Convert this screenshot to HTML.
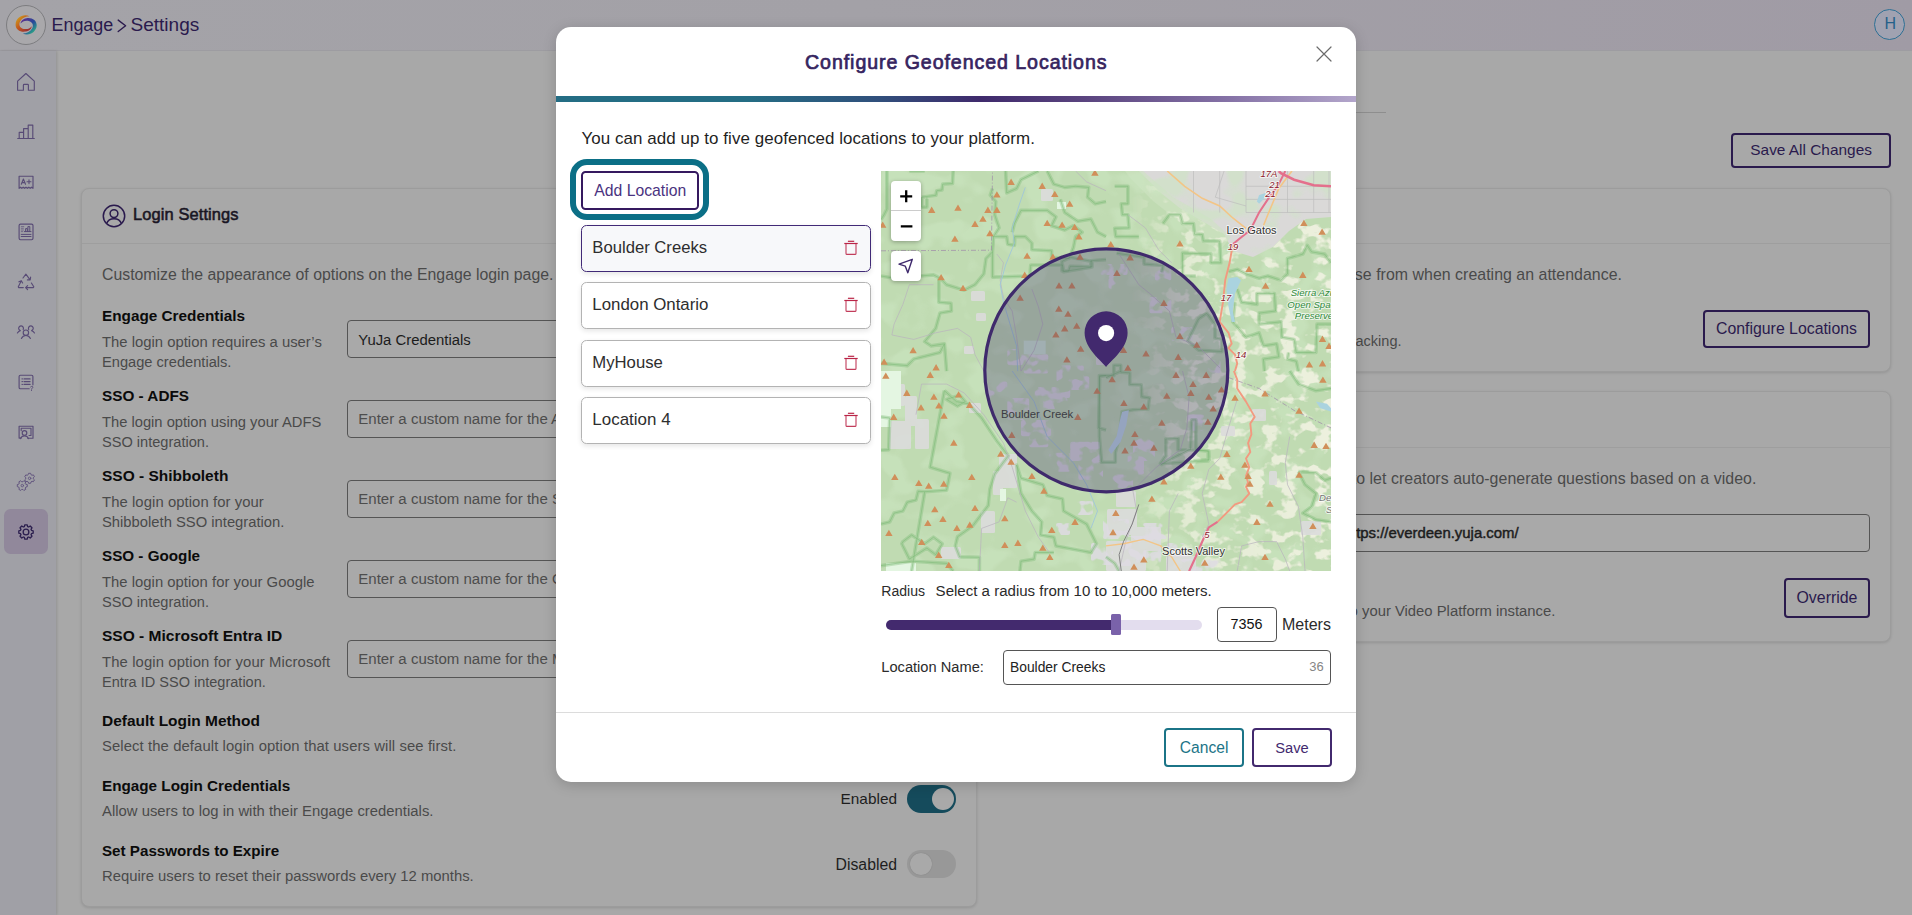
<!DOCTYPE html>
<html><head><meta charset="utf-8"><title>Engage Settings</title>
<style>
*{box-sizing:border-box;margin:0;padding:0}
html,body{width:1912px;height:915px;overflow:hidden;background:#a8a8a8;font-family:"Liberation Sans",sans-serif;}
.t{position:absolute;white-space:nowrap;line-height:24px;height:24px;}
.b{position:absolute;}
svg{position:absolute;overflow:visible}
</style></head>
<body>
<div id="root" style="position:absolute;left:0;top:0;width:1912px;height:915px;overflow:hidden">
<div class="b" style="left:0.0px;top:0.0px;width:1912.0px;height:50.5px;background:linear-gradient(90deg,#a4a3a8 0%,#a3a1a7 45%,#a09ba5 100%);"></div>
<div class="b" style="left:0.0px;top:50.0px;width:1912.0px;height:1.0px;background:#9d9ca1;"></div>
<div class="b" style="left:0.0px;top:51.0px;width:56.0px;height:864.0px;background:#a0a0a6;box-shadow:1px 0 2.5px rgba(0,0,0,0.13);"></div>
<svg style="left:6px;top:5px" width="40" height="40" viewBox="0 0 40 40">
<defs>
<linearGradient id="lg1" x1="0" y1="0" x2="1" y2="1"><stop offset="0" stop-color="#d2b21c"/><stop offset=".45" stop-color="#c25a1d"/><stop offset="1" stop-color="#8a1f3a"/></linearGradient>
<linearGradient id="lg2" x1="0" y1="0" x2="1" y2="1"><stop offset="0" stop-color="#6a2a8a"/><stop offset=".5" stop-color="#27469a"/><stop offset=".8" stop-color="#2a9a8a"/><stop offset="1" stop-color="#8ab02a"/></linearGradient>
</defs>
<circle cx="20" cy="20" r="19.5" fill="#a9a8ab" stroke="#7d7d80" stroke-width="1"/>
<path d="M23.5 11.2 C17 8.5 10 12.5 9.6 19.2 C9.3 24.5 14.5 27.5 19.8 26.6 C23.5 26 25.8 23.4 25.6 21.2 C24.2 23.6 20.8 24.6 17.6 23.9 C13.6 23 12.4 19.4 14.2 16.2 C16 13 20 11.2 23.5 11.2 Z" fill="url(#lg1)"/>
<path d="M16.8 28.6 C23.3 31.3 30.3 27.3 30.7 20.6 C31 15.3 25.8 12.3 20.5 13.2 C16.8 13.8 14.5 16.4 14.7 18.6 C16.1 16.2 19.5 15.2 22.7 15.9 C26.7 16.8 27.9 20.4 26.1 23.6 C24.3 26.8 20.3 28.6 16.8 28.6 Z" fill="url(#lg2)"/>
</svg>
<div class="t " style="left:51.5px;top:12.5px;font-size:17.92px;font-weight:400;color:#2a1a4d;letter-spacing:0.0px;">Engage</div>
<svg style="left:116px;top:16px" width="12" height="18" viewBox="0 0 12 18" fill="none" stroke="#2a1a4d" stroke-width="1.4" stroke-linecap="round" stroke-linejoin="round"><path d="M2.2 4.1 L9.6 9.8 L2.2 15.5"/></svg>
<div class="t " style="left:130.5px;top:12.5px;font-size:19.04px;font-weight:400;color:#2a1a4d;letter-spacing:0.0px;">Settings</div>
<div class="b" style="left:1873.6px;top:8.6px;width:31.4px;height:31.4px;border-radius:50%;border:1.2px solid #2e7095;background:#a0a2b1;"></div>
<div class="t " style="left:1884.4px;top:12.1px;font-size:16px;font-weight:400;color:#25618a;letter-spacing:0px;">H</div>
<div class="b" style="left:4.0px;top:509.0px;width:44.0px;height:45.0px;background:#91889b;border-radius:6.5px;"></div>
<svg style="left:16px;top:72px" width="20" height="20" viewBox="0 0 20 20" fill="none" stroke="#584b76" stroke-width="1.15" stroke-linecap="round" stroke-linejoin="round"><path d="M1.6 9.2 L9.9 1.5 L18.3 9.2 V18.2 H12.4 V13.2 Q12.4 12.4 11.6 12.4 H8.2 Q7.4 12.4 7.4 13.2 V18.2 H1.6 Z"/></svg>
<svg style="left:16px;top:122px" width="20" height="20" viewBox="0 0 20 20" fill="none" stroke="#584b76" stroke-width="1.15" stroke-linecap="round" stroke-linejoin="round"><path d="M1.7 16.5 H18.3 M3.2 16.5 V10.4 H7.6 V16.5 M7.6 16.5 V6.6 H12.2 V16.5 M12.2 16.5 V3.1 H16.8 V16.5"/></svg>
<svg style="left:16px;top:172px" width="20" height="20" viewBox="0 0 20 20" fill="none" stroke="#584b76" stroke-width="1.15" stroke-linecap="round" stroke-linejoin="round"><path d="M3.1 16.3 V4.2 H17 V16.3 L15.6 15.2 L14.2 16.3 L12.8 15.2 L11.4 16.3 L10 15.2 L8.6 16.3 L7.2 15.2 L5.8 16.3 L4.4 15.2 Z"/><path d="M5.3 12.2 L7.4 7 L9.5 12.2 M6 10.6 H8.8 M11 9.7 H15 M13 7.8 V11.6" stroke-width="1.1"/></svg>
<svg style="left:16px;top:222px" width="20" height="20" viewBox="0 0 20 20" fill="none" stroke="#584b76" stroke-width="1.15" stroke-linecap="round" stroke-linejoin="round"><rect x="3.1" y="2.1" width="13.9" height="15.6" rx="1.4"/><path d="M5.2 12.4 H15 M5.2 14.5 H15" stroke-width="1"/><path d="M5.3 4.6 H7.8 M5.3 6.3 H7.4 M5.3 8 H7.4 M5.3 9.6 H6.8" stroke-width="0.8" stroke-opacity=".8"/><path d="M8.4 9.6 H15 M9.6 9.6 V6.6 H11.3 V9.6 M11.9 9.6 V4.6 H13.8 V9.6" stroke-width="1"/></svg>
<svg style="left:16px;top:272px" width="20" height="20" viewBox="0 0 20 20" fill="none" stroke="#584b76" stroke-width="1.15" stroke-linecap="round" stroke-linejoin="round"><path d="M7 6 L9.9 2.2 L14.1 7.8 M11.4 7.9 L14.2 7.9 L14.6 5.1" /><path d="M7.3 15.6 H2.6 L2.3 14.8 L5.3 8.8 M2.9 9.8 L5.3 8.7 L6.6 11"/><path d="M15.4 11 L17.8 14.8 L17.4 15.6 H9.7 M11.6 13.6 L9.6 15.6 L11.6 17.7"/></svg>
<svg style="left:16px;top:322px" width="20" height="20" viewBox="0 0 20 20" fill="none" stroke="#584b76" stroke-width="1.15" stroke-linecap="round" stroke-linejoin="round"><circle cx="9.9" cy="10.7" r="2.7"/><path d="M5.4 16.5 C6.6 14.2 8.2 13.5 9.9 13.5 C11.6 13.5 13.2 14.2 14.4 16.5"/><path d="M7.2 7.4 A2.4 2.4 0 1 0 4.3 8.6 M1.4 11 C2.2 9.6 3.1 8.9 4.3 8.6"/><path d="M12.7 7.4 A2.4 2.4 0 1 1 15.6 8.6 M18.5 11 C17.7 9.6 16.8 8.9 15.6 8.6"/></svg>
<svg style="left:16px;top:372px" width="20" height="20" viewBox="0 0 20 20" fill="none" stroke="#584b76" stroke-width="1.15" stroke-linecap="round" stroke-linejoin="round"><path d="M13.2 16.7 H4.4 Q3.1 16.7 3.1 15.4 V4.5 Q3.1 3.2 4.4 3.2 H15.6 Q16.9 3.2 16.9 4.5 V12.8"/><path d="M8.1 6.9 H14.1 M8.1 9.6 H14.1 M8.1 12.4 H14.1" stroke-width="1.1"/><path d="M5.9 6.9 H6.8 M5.9 9.6 H6.8 M5.9 12.4 H6.8" stroke-width="1"/><path d="M14.6 14.9 Q15.6 14 16.6 14.6 Q17.3 15.4 16 16.4 L15.7 17.2 M15.5 18.3 V18.5" stroke-width="0.95"/></svg>
<svg style="left:16px;top:422px" width="20" height="20" viewBox="0 0 20 20" fill="none" stroke="#584b76" stroke-width="1.15" stroke-linecap="round" stroke-linejoin="round"><path d="M5.2 15.9 L3.1 16.2 V4.2 H17 V16.2 H11.8"/><path d="M5.2 8.6 V6.3 H15 V13.5 H13" stroke-width="1.1"/><circle cx="8.5" cy="10.9" r="2.3"/><path d="M4.6 16.6 C5.4 14.6 6.8 13.9 8.5 13.9 C10.2 13.9 11.6 14.6 12.4 16.6"/></svg>
<svg style="left:16px;top:472px" width="20" height="20" viewBox="0 0 20 20" fill="none" stroke="#62557f" stroke-width="1.15" stroke-linecap="round" stroke-linejoin="round"><path d="M17.45 6.92 L18.46 7.86 L17.40 9.70 L16.08 9.31 L14.99 9.95 L14.68 11.28 L12.55 11.29 L12.24 9.95 L11.14 9.32 L9.82 9.73 L8.75 7.89 L9.75 6.95 L9.75 5.68 L8.74 4.74 L9.80 2.90 L11.12 3.29 L12.21 2.65 L12.52 1.32 L14.65 1.31 L14.96 2.65 L16.06 3.28 L17.38 2.87 L18.45 4.71 L17.45 5.65 Z" stroke-width="1"/><circle cx="13.6" cy="6.3" r="1.25" stroke-width="0.9"/><path d="M9.95 12.23 L11.29 12.54 L11.29 14.66 L9.95 14.97 L9.31 16.07 L9.71 17.39 L7.87 18.45 L6.94 17.45 L5.66 17.45 L4.73 18.45 L2.89 17.39 L3.29 16.07 L2.65 14.97 L1.31 14.66 L1.31 12.54 L2.65 12.23 L3.29 11.13 L2.89 9.81 L4.73 8.75 L5.66 9.75 L6.94 9.75 L7.87 8.75 L9.71 9.81 L9.31 11.13 Z" stroke-width="1"/><circle cx="6.3" cy="13.6" r="1.25" stroke-width="0.9"/></svg>
<svg style="left:16px;top:522px" width="20" height="20" viewBox="0 0 20 20" fill="none" stroke="#2b1e4e" stroke-width="1.3" stroke-linecap="round" stroke-linejoin="round"><path d="M15.46 8.37 L17.19 8.76 L17.19 11.24 L15.46 11.63 L15.01 12.71 L15.96 14.21 L14.21 15.96 L12.71 15.01 L11.63 15.46 L11.24 17.19 L8.76 17.19 L8.37 15.46 L7.29 15.01 L5.79 15.96 L4.04 14.21 L4.99 12.71 L4.54 11.63 L2.81 11.24 L2.81 8.76 L4.54 8.37 L4.99 7.29 L4.04 5.79 L5.79 4.04 L7.29 4.99 L8.37 4.54 L8.76 2.81 L11.24 2.81 L11.63 4.54 L12.71 4.99 L14.21 4.04 L15.96 5.79 L15.01 7.29 Z" stroke-linejoin="round"/><circle cx="10" cy="10" r="2.85"/></svg>
<div class="b" style="left:1356.0px;top:112.0px;width:30.0px;height:1.0px;background:#8e8e8e;"></div>
<div class="b" style="left:1731.0px;top:133.0px;width:160.0px;height:35.0px;border:2px solid #2a1a4d;border-radius:4px;background:#a8a8a8;"></div>
<div class="t " style="left:1750.3px;top:138.0px;font-size:15.42px;font-weight:400;color:#2a1a4d;letter-spacing:0.0px;">Save All Changes</div>
<div class="b" style="left:81.0px;top:187.5px;width:896.0px;height:719.0px;background:#a8a8a8;border:1px solid #9c9c9c;border-radius:8px;box-shadow:0 1px 3px rgba(0,0,0,0.12);"></div>
<div class="b" style="left:82.0px;top:243.0px;width:894.0px;height:1.0px;background:#9e9e9e;"></div>
<div class="b" style="left:1000.0px;top:187.5px;width:891.0px;height:184.5px;background:#a8a8a8;border:1px solid #9c9c9c;border-radius:8px;box-shadow:0 1px 3px rgba(0,0,0,0.12);"></div>
<div class="b" style="left:1001.0px;top:243.0px;width:889.0px;height:1.0px;background:#9e9e9e;"></div>
<div class="b" style="left:1000.0px;top:391.0px;width:891.0px;height:251.0px;background:#a8a8a8;border:1px solid #9c9c9c;border-radius:8px;box-shadow:0 1px 3px rgba(0,0,0,0.12);"></div>
<div class="b" style="left:1001.0px;top:447.0px;width:889.0px;height:1.0px;background:#9e9e9e;"></div>
<svg style="left:102px;top:204px" width="24" height="24" viewBox="0 0 24 24" fill="none" stroke="#2a1a4d" stroke-width="1.5"><circle cx="12" cy="12" r="10.7"/><circle cx="12" cy="9.6" r="3.9"/><path d="M4.6 19.6 C6 15.8 9 14.8 12 14.8 C15 14.8 18 15.8 19.4 19.6"/></svg>
<div class="t " style="left:133.0px;top:202.2px;font-size:16.43px;font-weight:400;color:#1a1624;letter-spacing:0.111px;-webkit-text-stroke:0.55px #1a1624;">Login Settings</div>
<div class="t " style="left:102.0px;top:263.3px;font-size:15.83px;font-weight:400;color:#4a4a4a;letter-spacing:0.0px;">Customize the appearance of options on the Engage login page.</div>
<div class="t " style="left:102.0px;top:303.7px;font-size:15.32px;font-weight:700;color:#0b0b0b;letter-spacing:0.0px;">Engage Credentials</div>
<div class="t " style="left:102.0px;top:329.7px;font-size:14.84px;font-weight:400;color:#4a4a4a;letter-spacing:0.008px;">The login option requires a user’s</div>
<div class="t " style="left:102.0px;top:349.7px;font-size:14.65px;font-weight:400;color:#4a4a4a;letter-spacing:0.0px;">Engage credentials.</div>
<div class="b" style="left:347.0px;top:320.0px;width:613.0px;height:38.0px;border:1px solid #555;border-radius:4px;background:#a9a9a9;"></div>
<div class="t " style="left:358.3px;top:327.5px;font-size:14.89px;font-weight:400;color:#1c1c1c;letter-spacing:0.0px;">YuJa Credentials</div>
<div class="t " style="left:102.0px;top:383.7px;font-size:15.3px;font-weight:700;color:#0b0b0b;letter-spacing:0.0px;">SSO - ADFS</div>
<div class="t " style="left:102.0px;top:409.7px;font-size:14.73px;font-weight:400;color:#4a4a4a;letter-spacing:0.0px;">The login option using your ADFS</div>
<div class="t " style="left:102.0px;top:429.7px;font-size:14.58px;font-weight:400;color:#4a4a4a;letter-spacing:0.0px;">SSO integration.</div>
<div class="b" style="left:347.0px;top:400.0px;width:613.0px;height:38.0px;border:1px solid #555;border-radius:4px;background:#a9a9a9;"></div>
<div class="t " style="left:358.3px;top:407.1px;font-size:15.03px;font-weight:400;color:#4d4d4d;letter-spacing:0.0px;">Enter a custom name for the ADFS login option</div>
<div class="t " style="left:102.0px;top:463.7px;font-size:15.47px;font-weight:700;color:#0b0b0b;letter-spacing:0.0px;">SSO - Shibboleth</div>
<div class="t " style="left:102.0px;top:489.7px;font-size:14.84px;font-weight:400;color:#4a4a4a;letter-spacing:0.078px;">The login option for your</div>
<div class="t " style="left:102.0px;top:509.7px;font-size:14.79px;font-weight:400;color:#4a4a4a;letter-spacing:0.0px;">Shibboleth SSO integration.</div>
<div class="b" style="left:347.0px;top:480.0px;width:613.0px;height:38.0px;border:1px solid #555;border-radius:4px;background:#a9a9a9;"></div>
<div class="t " style="left:358.3px;top:487.1px;font-size:15.03px;font-weight:400;color:#4d4d4d;letter-spacing:0.0px;">Enter a custom name for the Shibboleth login option</div>
<div class="t " style="left:102.0px;top:543.7px;font-size:15.23px;font-weight:700;color:#0b0b0b;letter-spacing:0.0px;">SSO - Google</div>
<div class="t " style="left:102.0px;top:569.7px;font-size:14.84px;font-weight:400;color:#4a4a4a;letter-spacing:0.021px;">The login option for your Google</div>
<div class="t " style="left:102.0px;top:589.7px;font-size:14.58px;font-weight:400;color:#4a4a4a;letter-spacing:0.0px;">SSO integration.</div>
<div class="b" style="left:347.0px;top:560.0px;width:613.0px;height:38.0px;border:1px solid #555;border-radius:4px;background:#a9a9a9;"></div>
<div class="t " style="left:358.3px;top:567.1px;font-size:15.03px;font-weight:400;color:#4d4d4d;letter-spacing:0.0px;">Enter a custom name for the Google login option</div>
<div class="t " style="left:102.0px;top:623.7px;font-size:15.52px;font-weight:700;color:#0b0b0b;letter-spacing:0.0px;">SSO - Microsoft Entra ID</div>
<div class="t " style="left:102.0px;top:649.7px;font-size:14.84px;font-weight:400;color:#4a4a4a;letter-spacing:0.118px;">The login option for your Microsoft</div>
<div class="t " style="left:102.0px;top:669.7px;font-size:14.53px;font-weight:400;color:#4a4a4a;letter-spacing:0.0px;">Entra ID SSO integration.</div>
<div class="b" style="left:347.0px;top:640.0px;width:613.0px;height:38.0px;border:1px solid #555;border-radius:4px;background:#a9a9a9;"></div>
<div class="t " style="left:358.3px;top:647.1px;font-size:15.03px;font-weight:400;color:#4d4d4d;letter-spacing:0.0px;">Enter a custom name for the Microsoft Entra ID login option</div>
<div class="t " style="left:102.0px;top:708.8px;font-size:15.46px;font-weight:700;color:#0b0b0b;letter-spacing:0.0px;">Default Login Method</div>
<div class="t " style="left:102.0px;top:734.3px;font-size:14.84px;font-weight:400;color:#4a4a4a;letter-spacing:0.101px;">Select the default login option that users will see first.</div>
<div class="t " style="left:102.0px;top:773.9px;font-size:15.26px;font-weight:700;color:#0b0b0b;letter-spacing:0.0px;">Engage Login Credentials</div>
<div class="t " style="left:102.0px;top:799.0px;font-size:14.84px;font-weight:400;color:#4a4a4a;letter-spacing:0.018px;">Allow users to log in with their Engage credentials.</div>
<div class="t " style="left:102.0px;top:838.6px;font-size:15.18px;font-weight:700;color:#0b0b0b;letter-spacing:0.0px;">Set Passwords to Expire</div>
<div class="t " style="left:102.0px;top:864.0px;font-size:14.84px;font-weight:400;color:#4a4a4a;letter-spacing:0.0px;">Require users to reset their passwords every 12 months.</div>
<div class="t " style="right:1015.0px;top:786.9px;font-size:15.39px;font-weight:400;color:#1e1e1e;letter-spacing:0.0px;">Enabled</div>
<div class="b" style="left:907.0px;top:785.0px;width:49.0px;height:27.6px;background:#154b5c;border-radius:14px;"></div>
<div class="b" style="left:931.5px;top:787.8px;width:22.0px;height:22.0px;background:#a9a9a9;border-radius:50%;"></div>
<div class="t " style="right:1015.0px;top:852.5px;font-size:15.8px;font-weight:400;color:#1e1e1e;letter-spacing:0.0px;">Disabled</div>
<div class="b" style="left:907.0px;top:850.0px;width:49.0px;height:27.6px;background:#989898;border-radius:14px;"></div>
<div class="b" style="left:909.5px;top:852.8px;width:22.0px;height:22.0px;background:#a9a9a9;border-radius:50%;box-shadow:0 0 1px rgba(0,0,0,.25);"></div>
<div class="t " style="right:290.0px;top:262.8px;font-size:15.9px;font-weight:400;color:#4a4a4a;letter-spacing:0.035px;">Select the locations to choose from when creating an attendance.</div>
<div class="t " style="right:510.5px;top:329.2px;font-size:14.52px;font-weight:400;color:#4a4a4a;letter-spacing:0.0px;">Enable location tracking.</div>
<div class="b" style="left:1703.0px;top:309.6px;width:167.0px;height:38.0px;border:2px solid #2a1a4d;border-radius:4px;background:#a8a8a8;"></div>
<div class="t " style="left:1716.0px;top:316.8px;font-size:15.85px;font-weight:400;color:#2a1a4d;letter-spacing:0.0px;">Configure Locations</div>
<div class="t " style="right:155.6px;top:466.6px;font-size:15.9px;font-weight:400;color:#4a4a4a;letter-spacing:0.048px;">Enable to let creators auto-generate questions based on a video.</div>
<div class="b" style="left:1100.0px;top:514.0px;width:770.0px;height:38.0px;border:1px solid #555;border-radius:4px;background:#a9a9a9;"></div>
<div class="t " style="right:393.3px;top:521.4px;font-size:14.93px;font-weight:400;color:#1d1d1d;letter-spacing:0.0px;-webkit-text-stroke:0.45px #1d1d1d;">tps://everdeen.yuja.com/</div>
<div class="b" style="left:1784.0px;top:578.4px;width:86.0px;height:39.2px;border:2px solid #2a1a4d;border-radius:4px;background:#a8a8a8;"></div>
<div class="t " style="left:1796.5px;top:586.0px;font-size:15.9px;font-weight:400;color:#2a1a4d;letter-spacing:0.002px;">Override</div>
<div class="t " style="right:356.6px;top:599.4px;font-size:14.83px;font-weight:400;color:#4a4a4a;letter-spacing:-0.0px;">Connect to your Video Platform instance.</div>

<div class="b" style="left:556.0px;top:27.0px;width:800.0px;height:754.6px;background:#fff;border-radius:15px;box-shadow:0 3px 14px rgba(0,0,0,0.17);"></div>
<div class="t " style="left:805.0px;top:50.1px;font-size:19.6px;font-weight:400;color:#36245f;letter-spacing:0.928px;-webkit-text-stroke:0.7px #36245f;">Configure Geofenced Locations</div>
<svg style="left:1316px;top:46px" width="16" height="16" viewBox="0 0 16 16" fill="none" stroke="#6b6b6b" stroke-width="1.2" stroke-linecap="round"><path d="M1 1 L15 15 M15 1 L1 15"/></svg>
<div class="b" style="left:556.0px;top:96.0px;width:800.0px;height:5.7px;background:linear-gradient(90deg,#246d84 0%,#246d84 24%,#30507c 40%,#3f2a6c 53%,#5a447f 66%,#8572a6 84%,#b3a6cb 100%);"></div>
<div class="t " style="left:581.5px;top:127.4px;font-size:16.96px;font-weight:400;color:#1f1f1f;letter-spacing:0.066px;">You can add up to five geofenced locations to your platform.</div>
<div class="b" style="left:570.0px;top:159.0px;width:139.0px;height:61.0px;border:6px solid #0b6f86;border-radius:17px;background:#fff;"></div>
<div class="b" style="left:581.0px;top:171.0px;width:118.0px;height:39.0px;border:2px solid #35195f;border-radius:4.5px;background:#fff;"></div>
<div class="t " style="left:594.3px;top:178.7px;font-size:15.76px;font-weight:400;color:#4a3380;letter-spacing:0.0px;">Add Location</div>
<div class="b" style="left:581.0px;top:225.0px;width:290.0px;height:47.0px;border:1.4px solid #412a77;background:#f7f8fa;border-radius:5.5px;box-shadow:0 2px 5px rgba(0,0,0,.10);"></div>
<div class="t " style="left:592.3px;top:236.2px;font-size:16.66px;font-weight:400;color:#2e2e2e;letter-spacing:0.0px;">Boulder Creeks</div>
<svg style="left:844.0px;top:240.0px" width="14" height="16" viewBox="0 0 14 16" fill="none" stroke="#ba2547" stroke-width="1.1" stroke-linejoin="round" stroke-linecap="butt"><path d="M3.9 1.3 H10.2" stroke-width="1.2"/><path d="M0.3 3.5 H13.7" stroke-width="1.2"/><path d="M2 4 V13.4 Q2 14.4 3 14.4 H11 Q12 14.4 12 13.4 V4" stroke="#c23d5b"/></svg>
<div class="b" style="left:581.0px;top:282.0px;width:290.0px;height:47.0px;border:1px solid #b3b3b3;background:#fff;border-radius:5.5px;box-shadow:0 2px 5px rgba(0,0,0,.10);"></div>
<div class="t " style="left:592.3px;top:293.2px;font-size:16.85px;font-weight:400;color:#2e2e2e;letter-spacing:0.0px;">London Ontario</div>
<svg style="left:844.0px;top:297.0px" width="14" height="16" viewBox="0 0 14 16" fill="none" stroke="#ba2547" stroke-width="1.1" stroke-linejoin="round" stroke-linecap="butt"><path d="M3.9 1.3 H10.2" stroke-width="1.2"/><path d="M0.3 3.5 H13.7" stroke-width="1.2"/><path d="M2 4 V13.4 Q2 14.4 3 14.4 H11 Q12 14.4 12 13.4 V4" stroke="#c23d5b"/></svg>
<div class="b" style="left:581.0px;top:340.0px;width:290.0px;height:47.0px;border:1px solid #b3b3b3;background:#fff;border-radius:5.5px;box-shadow:0 2px 5px rgba(0,0,0,.10);"></div>
<div class="t " style="left:592.3px;top:351.2px;font-size:16.72px;font-weight:400;color:#2e2e2e;letter-spacing:0.0px;">MyHouse</div>
<svg style="left:844.0px;top:355.0px" width="14" height="16" viewBox="0 0 14 16" fill="none" stroke="#ba2547" stroke-width="1.1" stroke-linejoin="round" stroke-linecap="butt"><path d="M3.9 1.3 H10.2" stroke-width="1.2"/><path d="M0.3 3.5 H13.7" stroke-width="1.2"/><path d="M2 4 V13.4 Q2 14.4 3 14.4 H11 Q12 14.4 12 13.4 V4" stroke="#c23d5b"/></svg>
<div class="b" style="left:581.0px;top:397.0px;width:290.0px;height:47.0px;border:1px solid #b3b3b3;background:#fff;border-radius:5.5px;box-shadow:0 2px 5px rgba(0,0,0,.10);"></div>
<div class="t " style="left:592.3px;top:408.2px;font-size:16.96px;font-weight:400;color:#2e2e2e;letter-spacing:0.013px;">Location 4</div>
<svg style="left:844.0px;top:412.0px" width="14" height="16" viewBox="0 0 14 16" fill="none" stroke="#ba2547" stroke-width="1.1" stroke-linejoin="round" stroke-linecap="butt"><path d="M3.9 1.3 H10.2" stroke-width="1.2"/><path d="M0.3 3.5 H13.7" stroke-width="1.2"/><path d="M2 4 V13.4 Q2 14.4 3 14.4 H11 Q12 14.4 12 13.4 V4" stroke="#c23d5b"/></svg>
<svg style="left:881px;top:171px;overflow:hidden" width="450" height="400" viewBox="0 0 450 400"><rect x="0" y="0" width="450" height="400" fill="#c0dbb2"/><path d="M258 0 L280 22 L300 38 L316 47 L343 63 L352 80 L372 86 L392 76 L408 60 L425 48 L450 46 L450 0 Z" fill="#dad9d8"/><path d="M262 0 L292 26 L330 48 L350 66 L340 78 L318 70 L300 52 L272 30 L250 8 L244 0 Z" fill="#cfe3c3" opacity=".6"/><defs><filter id="blot" x="0" y="0" width="100%" height="100%" color-interpolation-filters="sRGB"><feTurbulence type="fractalNoise" baseFrequency="0.06 0.075" numOctaves="3" seed="11" result="n"/><feColorMatrix in="n" type="matrix" values="0 0 0 0 0.93  0 0 0 0 0.94  0 0 0 0 0.87  9 0 0 0 -4.75"/></filter><filter id="blot2" x="0" y="0" width="100%" height="100%" color-interpolation-filters="sRGB"><feTurbulence type="fractalNoise" baseFrequency="0.035 0.04" numOctaves="2" seed="5" result="n"/><feColorMatrix in="n" type="matrix" values="0 0 0 0 0.80  0 0 0 0 0.90  0 0 0 0 0.76  7 0 0 0 -3.6"/></filter><linearGradient id="mg" x1="0" y1="0" x2="1" y2="0"><stop offset="0" stop-color="#fff" stop-opacity="0"/><stop offset=".55" stop-color="#fff" stop-opacity="0"/><stop offset=".68" stop-color="#fff" stop-opacity=".75"/><stop offset="1" stop-color="#fff" stop-opacity="1"/></linearGradient><mask id="mk"><rect x="0" y="0" width="450" height="400" fill="url(#mg)"/><path d="M258 0 L280 22 L300 38 L316 47 L343 63 L352 80 L372 86 L392 76 L408 60 L425 48 L450 46 L450 0 Z" fill="#000"/></mask></defs><rect x="0" y="0" width="450" height="400" filter="url(#blot2)" opacity=".55"/><g mask="url(#mk)"><rect x="0" y="0" width="450" height="400" filter="url(#blot)"/></g><g fill="#dcdcdc" opacity=".9"><rect x="10" y="213" width="14" height="22" rx="1.5"/><rect x="24" y="225" width="12" height="30" rx="1.5"/><rect x="8" y="250" width="22" height="28" rx="1.5"/><rect x="34" y="248" width="14" height="30" rx="1.5"/><rect x="90" y="120" width="14" height="10" rx="1.5"/><rect x="95" y="142" width="10" height="8" rx="1.5"/><rect x="83" y="175" width="10" height="8" rx="1.5"/><rect x="88" y="232" width="12" height="10" rx="1.5"/><rect x="118" y="283" width="18" height="34" rx="1.5"/><rect x="112" y="300" width="10" height="24" rx="1.5"/><rect x="160" y="18" width="12" height="12" rx="1.5"/><rect x="215" y="180" width="14" height="14" rx="1.5"/><rect x="235" y="320" width="20" height="16" rx="1.5"/><rect x="226" y="338" width="30" height="26" rx="1.5"/><rect x="250" y="356" width="30" height="24" rx="1.5"/><rect x="225" y="370" width="40" height="30" rx="1.5"/><rect x="285" y="385" width="30" height="15" rx="1.5"/><rect x="100" y="340" width="14" height="22" rx="1.5"/><rect x="60" y="376" width="20" height="12" rx="1.5"/><rect x="340" y="255" width="14" height="10" rx="1.5"/><rect x="371" y="238" width="14" height="12" rx="1.5"/><rect x="420" y="350" width="20" height="14" rx="1.5"/><rect x="388" y="300" width="8" height="14" rx="1.5"/></g><defs><filter id="blot3" x="0" y="0" width="100%" height="100%" color-interpolation-filters="sRGB"><feTurbulence type="fractalNoise" baseFrequency="0.09 0.1" numOctaves="2" seed="23"/><feColorMatrix type="matrix" values="0 0 0 0 0.87  0 0 0 0 0.86  0 0 0 0 0.89  8 0 0 0 -3.6"/></filter><mask id="mk3"><g fill="#fff"><rect x="126.3" y="177.9" width="19.1" height="16.4" rx="2"/><rect x="142.7" y="183.3" width="24.6" height="19.1" rx="2"/><rect x="107.2" y="210.6" width="19.1" height="16.4" rx="2"/><rect x="153.7" y="216.1" width="35.5" height="10.9" rx="2"/><rect x="161.9" y="227.0" width="24.6" height="10.9" rx="2"/><rect x="140.0" y="248.9" width="30.1" height="16.4" rx="2"/><rect x="148.2" y="265.3" width="19.1" height="10.9" rx="2"/><rect x="189.2" y="270.8" width="30.1" height="19.1" rx="2"/><rect x="197.4" y="289.9" width="24.6" height="19.1" rx="2"/><rect x="252.0" y="265.3" width="21.9" height="24.6" rx="2"/><rect x="268.4" y="125.9" width="21.9" height="16.4" rx="2"/><rect x="290.3" y="156.0" width="21.9" height="13.7" rx="2"/><rect x="273.9" y="95.9" width="16.4" height="13.7" rx="2"/><rect x="219.3" y="93.1" width="27.3" height="10.9" rx="2"/><rect x="227.5" y="104.1" width="13.7" height="13.7" rx="2"/><rect x="175.5" y="194.3" width="27.3" height="16.4" rx="2"/><rect x="189.2" y="205.2" width="19.1" height="13.7" rx="2"/><rect x="126.3" y="227.0" width="21.9" height="21.9" rx="2"/><rect x="306.7" y="243.4" width="16.4" height="16.4" rx="2"/><rect x="325.8" y="188.8" width="13.7" height="13.7" rx="2"/><rect x="246.6" y="281.7" width="16.4" height="21.9" rx="2"/><rect x="230.2" y="303.6" width="21.9" height="13.7" rx="2"/><rect x="167.3" y="281.7" width="21.9" height="19.1" rx="2"/><rect x="222" y="348" width="26" height="20" rx="2"/><rect x="240" y="365" width="40" height="30" rx="2"/><rect x="262" y="352" width="24" height="16" rx="2"/><rect x="210" y="372" width="22" height="22" rx="2"/><rect x="286" y="372" width="22" height="14" rx="2"/><rect x="300" y="388" width="40" height="12" rx="2"/><rect x="196" y="330" width="16" height="14" rx="2"/><rect x="175" y="352" width="14" height="12" rx="2"/></g></mask></defs><g mask="url(#mk3)"><rect x="0" y="0" width="450" height="400" filter="url(#blot3)" opacity=".85"/></g><g fill="#e4f6e2"><rect x="0" y="200" width="20" height="38"/><rect x="0" y="238" width="10" height="18"/><rect x="176" y="31" width="9" height="7"/><rect x="119" y="318" width="6" height="12"/><rect x="5" y="392" width="30" height="8"/></g><rect x="142.7" y="169.6" width="22" height="13.7" fill="#d0ecd8" opacity=".8"/><path d="M63.4 219.7 L75.4 230.6 L87.5 232.8 L100.6 247.0 L115.9 270.0 L127.3 284.8 L113.7 302.8 L108.9 318.1 L107.2 334.5 L91.8 354.8 L76.5 365.8 L74.3 374.9 L78.7 385.9 L98.4 386.3 L98.4 400.1 M63.4 219.7 L49.2 296.2 L68.9 302.3 L65.6 319.2 L43.7 320.7 L30.6 400.1 M0.0 353.1 L8.7 350.9 L13.1 342.1 L21.9 340.0 L26.2 331.2 L35.0 329.0 L37.2 320.3 L43.7 320.7 M21.9 370.6 L30.6 364.0 L43.7 372.8 L52.5 366.2 L61.2 372.8 L54.7 383.7 L45.9 377.1 L28.4 388.1 L20.8 372.8 Z M0.0 394.6 L30.6 390.2 L65.6 392.4 L72.2 400.1 M0.0 245.9 L8.7 247.0 L7.7 278.7 L0.0 279.2 M65.6 228.4 L76.5 235.0 L84.2 230.6 L78.7 224.1 Z M135.6 294.0 L140.0 307.2 L161.8 313.7 L166.2 324.6 L181.5 327.9 L182.6 340.0 L205.6 353.1 L215.4 372.8 L209.9 381.5 L174.9 374.9 L172.8 366.2 L159.6 364.0 L160.7 350.9 L150.9 340.0 L140.0 322.5 L136.7 302.8 Z M138.9 400.1 L140.0 390.2 L153.1 388.1 L154.2 381.5 L172.8 381.5 M225.0 204.4 L218.7 205.5 L217.6 256.9 L225.0 259.0 M0.0 48.5 L3.1 43.7 L5.9 38.0 L5.9 0.0 M40.7 26.2 L54.9 24.3 L55.8 19.7 L61.0 19.0 L61.7 13.1 L71.5 12.5 L72.2 0.0 M40.7 26.2 L40.7 36.1 L45.9 36.1 L45.9 26.2 M28.4 0.0 L43.7 0.0 M0.0 105.0 L13.1 107.2 L39.4 105.0 L52.5 103.9 L59.0 107.2 L65.6 113.7 L83.1 119.2 L94.0 113.7 L102.8 102.8 L105.0 87.5 L111.5 80.9 L112.6 65.6 L118.1 56.9 L113.7 43.7 L114.8 30.6 L109.3 24.1 L111.5 17.5 M57.9 107.2 L57.9 131.2 L70.0 132.3 L70.4 140.0 L59.0 142.1 L54.7 157.4 L43.7 170.6 L50.3 174.9 L63.4 172.8 L65.6 200.1 M111.5 65.6 L125.7 65.6 L126.8 73.3 L133.4 74.3 L133.8 65.6 L144.3 65.6 L150.9 72.2 L150.9 78.7 L170.6 79.8 L170.6 86.4 L188.1 87.5 L192.4 76.5 L194.6 65.6 L201.2 61.2 L192.4 54.7 L183.7 59.0 L170.6 54.7 L174.9 45.9 L166.2 39.4 L140.0 39.4 L133.4 52.5 L131.2 61.2 M111.5 80.9 L111.5 106.1 L148.7 105.0 L149.8 94.0 L181.5 94.0 L182.6 100.6 L209.9 96.2 L209.9 89.7 L225.0 88.6 M124.6 0.0 L125.7 21.9 L135.6 17.5 L140.0 8.7 L153.1 2.2 L157.4 0.0 M166.2 0.0 L172.8 13.1 L183.7 16.4 L194.6 15.3 L207.7 16.4 L206.6 26.2 L214.3 32.8 L225.0 30.6 M179.3 28.4 L183.7 41.5 L196.8 50.3 L209.9 48.1 L216.5 61.2 L225.0 65.6 M0.0 192.4 L26.2 194.6 L32.8 188.1 L59.0 181.5 L63.4 172.8 M233.7 15.3 L246.9 15.3 L246.9 32.8 L240.3 32.8 L241.4 43.7 L246.9 43.7 L248.0 56.9 L233.7 57.3 L234.8 65.6 L257.8 65.6 M281.9 52.5 L288.4 43.7 L299.3 43.7 L301.5 52.5 L312.5 52.5 L313.6 63.4 L321.2 63.4 L322.3 70.0 L338.7 70.0 L339.8 91.8 L330.0 91.8 L330.0 83.1 L301.5 82.0 L301.5 105.0 L314.7 105.0 M347.5 100.6 L356.2 98.4 L365.0 102.8 L378.1 107.2 L386.8 105.0 L399.9 109.3 L406.5 102.8 L406.5 87.5 L421.8 83.1 L426.2 74.3 L430.6 80.9 L443.7 83.1 L450.0 91.8 M356.2 118.1 L360.6 131.2 L375.9 133.4 L375.9 122.5 L393.4 122.5 L394.5 140.0 L378.1 142.1 L378.1 153.1 L399.9 150.9 L401.0 166.2 L413.1 168.4 L415.2 181.5 L434.9 181.5 L436.0 153.1 L450.0 153.1 M354.0 131.2 L351.8 150.9 L365.0 166.2 L378.1 161.8 L382.4 174.9 L395.6 172.8 L397.8 185.9 L382.4 188.1 L383.5 200.1 M417.4 200.1 L415.2 190.2 L406.5 188.1 L407.6 181.5 M225.0 206.6 L240.3 200.0 M279.7 294.0 L290.6 287.5 L308.1 278.7 L327.8 279.8 L328.2 288.6 L312.5 289.7 M417.4 300.6 L434.9 301.7 L443.7 309.3 L450.0 307.2 M417.4 300.6 L424.0 313.7 L434.9 322.5 L430.6 335.6 L421.8 342.1 L434.9 348.7 L450.0 350.9 M408.7 200.0 L417.4 213.1 L434.9 219.7 L450.0 217.5 M225.0 385.9 L233.7 392.4 L238.1 400.1 M218.4 204.6 L232.9 204.6 L232.9 194.3 L239.7 194.3 L239.7 201.1 L248.8 201.9 L248.8 213.4 L260.2 213.9 L260.8 225.7 L268.4 227.0 L267.1 238.0 L252.0 238.8 L241.1 240.7 L238.4 265.3 L234.3 281.7 L234.3 291.3 L220.6 291.3 L218.4 265.3 Z M317.6 147.8 L325.8 142.3 L334.0 153.3 L334.0 166.9 L340.9 168.3 L340.9 180.6 L317.6 179.2 L306.7 169.7 Z M284.8 268.0 L297.1 267.5 L297.1 279.0 L309.4 279.0 L310.8 248.9 L314.9 248.9 L314.9 279.0 L327.2 280.3 L327.2 289.9 L279.4 292.6 L284.8 284.4 Z M181.0 90.4 L189.2 86.3 L211.0 90.4 L211.0 95.9 L189.2 95.3 L187.8 100.0 L181.0 100.0 Z M235.7 82.2 L263.0 86.3 L263.0 93.1 L282.1 94.5 L280.7 101.3" fill="none" stroke="#79bb75" stroke-opacity=".36" stroke-width="3.6" stroke-linejoin="round"/><path d="M63.4 219.7 L75.4 230.6 L87.5 232.8 L100.6 247.0 L115.9 270.0 L127.3 284.8 L113.7 302.8 L108.9 318.1 L107.2 334.5 L91.8 354.8 L76.5 365.8 L74.3 374.9 L78.7 385.9 L98.4 386.3 L98.4 400.1 M63.4 219.7 L49.2 296.2 L68.9 302.3 L65.6 319.2 L43.7 320.7 L30.6 400.1 M0.0 353.1 L8.7 350.9 L13.1 342.1 L21.9 340.0 L26.2 331.2 L35.0 329.0 L37.2 320.3 L43.7 320.7 M21.9 370.6 L30.6 364.0 L43.7 372.8 L52.5 366.2 L61.2 372.8 L54.7 383.7 L45.9 377.1 L28.4 388.1 L20.8 372.8 Z M0.0 394.6 L30.6 390.2 L65.6 392.4 L72.2 400.1 M0.0 245.9 L8.7 247.0 L7.7 278.7 L0.0 279.2 M65.6 228.4 L76.5 235.0 L84.2 230.6 L78.7 224.1 Z M135.6 294.0 L140.0 307.2 L161.8 313.7 L166.2 324.6 L181.5 327.9 L182.6 340.0 L205.6 353.1 L215.4 372.8 L209.9 381.5 L174.9 374.9 L172.8 366.2 L159.6 364.0 L160.7 350.9 L150.9 340.0 L140.0 322.5 L136.7 302.8 Z M138.9 400.1 L140.0 390.2 L153.1 388.1 L154.2 381.5 L172.8 381.5 M225.0 204.4 L218.7 205.5 L217.6 256.9 L225.0 259.0 M0.0 48.5 L3.1 43.7 L5.9 38.0 L5.9 0.0 M40.7 26.2 L54.9 24.3 L55.8 19.7 L61.0 19.0 L61.7 13.1 L71.5 12.5 L72.2 0.0 M40.7 26.2 L40.7 36.1 L45.9 36.1 L45.9 26.2 M28.4 0.0 L43.7 0.0 M0.0 105.0 L13.1 107.2 L39.4 105.0 L52.5 103.9 L59.0 107.2 L65.6 113.7 L83.1 119.2 L94.0 113.7 L102.8 102.8 L105.0 87.5 L111.5 80.9 L112.6 65.6 L118.1 56.9 L113.7 43.7 L114.8 30.6 L109.3 24.1 L111.5 17.5 M57.9 107.2 L57.9 131.2 L70.0 132.3 L70.4 140.0 L59.0 142.1 L54.7 157.4 L43.7 170.6 L50.3 174.9 L63.4 172.8 L65.6 200.1 M111.5 65.6 L125.7 65.6 L126.8 73.3 L133.4 74.3 L133.8 65.6 L144.3 65.6 L150.9 72.2 L150.9 78.7 L170.6 79.8 L170.6 86.4 L188.1 87.5 L192.4 76.5 L194.6 65.6 L201.2 61.2 L192.4 54.7 L183.7 59.0 L170.6 54.7 L174.9 45.9 L166.2 39.4 L140.0 39.4 L133.4 52.5 L131.2 61.2 M111.5 80.9 L111.5 106.1 L148.7 105.0 L149.8 94.0 L181.5 94.0 L182.6 100.6 L209.9 96.2 L209.9 89.7 L225.0 88.6 M124.6 0.0 L125.7 21.9 L135.6 17.5 L140.0 8.7 L153.1 2.2 L157.4 0.0 M166.2 0.0 L172.8 13.1 L183.7 16.4 L194.6 15.3 L207.7 16.4 L206.6 26.2 L214.3 32.8 L225.0 30.6 M179.3 28.4 L183.7 41.5 L196.8 50.3 L209.9 48.1 L216.5 61.2 L225.0 65.6 M0.0 192.4 L26.2 194.6 L32.8 188.1 L59.0 181.5 L63.4 172.8 M233.7 15.3 L246.9 15.3 L246.9 32.8 L240.3 32.8 L241.4 43.7 L246.9 43.7 L248.0 56.9 L233.7 57.3 L234.8 65.6 L257.8 65.6 M281.9 52.5 L288.4 43.7 L299.3 43.7 L301.5 52.5 L312.5 52.5 L313.6 63.4 L321.2 63.4 L322.3 70.0 L338.7 70.0 L339.8 91.8 L330.0 91.8 L330.0 83.1 L301.5 82.0 L301.5 105.0 L314.7 105.0 M347.5 100.6 L356.2 98.4 L365.0 102.8 L378.1 107.2 L386.8 105.0 L399.9 109.3 L406.5 102.8 L406.5 87.5 L421.8 83.1 L426.2 74.3 L430.6 80.9 L443.7 83.1 L450.0 91.8 M356.2 118.1 L360.6 131.2 L375.9 133.4 L375.9 122.5 L393.4 122.5 L394.5 140.0 L378.1 142.1 L378.1 153.1 L399.9 150.9 L401.0 166.2 L413.1 168.4 L415.2 181.5 L434.9 181.5 L436.0 153.1 L450.0 153.1 M354.0 131.2 L351.8 150.9 L365.0 166.2 L378.1 161.8 L382.4 174.9 L395.6 172.8 L397.8 185.9 L382.4 188.1 L383.5 200.1 M417.4 200.1 L415.2 190.2 L406.5 188.1 L407.6 181.5 M225.0 206.6 L240.3 200.0 M279.7 294.0 L290.6 287.5 L308.1 278.7 L327.8 279.8 L328.2 288.6 L312.5 289.7 M417.4 300.6 L434.9 301.7 L443.7 309.3 L450.0 307.2 M417.4 300.6 L424.0 313.7 L434.9 322.5 L430.6 335.6 L421.8 342.1 L434.9 348.7 L450.0 350.9 M408.7 200.0 L417.4 213.1 L434.9 219.7 L450.0 217.5 M225.0 385.9 L233.7 392.4 L238.1 400.1 M218.4 204.6 L232.9 204.6 L232.9 194.3 L239.7 194.3 L239.7 201.1 L248.8 201.9 L248.8 213.4 L260.2 213.9 L260.8 225.7 L268.4 227.0 L267.1 238.0 L252.0 238.8 L241.1 240.7 L238.4 265.3 L234.3 281.7 L234.3 291.3 L220.6 291.3 L218.4 265.3 Z M317.6 147.8 L325.8 142.3 L334.0 153.3 L334.0 166.9 L340.9 168.3 L340.9 180.6 L317.6 179.2 L306.7 169.7 Z M284.8 268.0 L297.1 267.5 L297.1 279.0 L309.4 279.0 L310.8 248.9 L314.9 248.9 L314.9 279.0 L327.2 280.3 L327.2 289.9 L279.4 292.6 L284.8 284.4 Z M181.0 90.4 L189.2 86.3 L211.0 90.4 L211.0 95.9 L189.2 95.3 L187.8 100.0 L181.0 100.0 Z M235.7 82.2 L263.0 86.3 L263.0 93.1 L282.1 94.5 L280.7 101.3" fill="none" stroke="#6fb26b" stroke-opacity=".42" stroke-width="1" stroke-linejoin="round"/><path d="M0.0 79.8 L110.4 79.2 L111.5 0.0 M347.5 206.6 L378.1 217.5 L413.1 239.4 L450.0 256.9" fill="none" stroke="#9a7fa8" stroke-opacity=".7" stroke-width="0.9" stroke-dasharray="5 2 1 2"/><path d="M52.5 113.7 L28.4 113.7 L21.9 133.4 L13.1 153.1 L10.9 164.0 L32.8 168.4 L54.7 161.8 L76.5 157.4 L89.7 166.2 L94.0 183.7 L102.8 200.1 M115.9 83.1 L122.5 91.8 L119.2 109.3 L122.5 126.8 L131.2 140.0 L135.6 166.2 L140.0 200.1 M150.9 118.1 L157.4 135.6 L161.8 153.1 L153.1 179.3 L140.0 200.1 M35.0 243.7 L40.5 213.1 L65.6 213.1 L83.1 221.9 L102.8 243.7 L122.5 272.2 L131.2 296.2 L144.3 340.0 L157.4 366.2 L168.4 381.5 M98.4 400.1 L100.6 357.4 L118.1 350.9 L126.8 326.8 L135.6 331.2 M238.1 83.1 L257.8 113.7 L268.7 122.5 L288.4 140.0 L295.0 166.2 L316.8 174.9 L338.7 196.8 M251.2 315.9 L255.6 340.0 L244.7 370.6 L238.1 400.1 M301.5 200.0 L308.1 226.2 L305.9 256.9 L299.3 278.7 L275.3 296.2 L257.8 313.7 M356.2 228.4 L347.5 256.9 L338.7 287.5 L327.8 298.4 L321.2 322.5 L327.8 353.1 L321.2 366.2 M286.2 400.1 L288.4 340.0 L297.2 322.5 M408.7 265.6 L404.3 291.8 L406.5 313.7 L417.4 335.6 L421.8 366.2 L424.0 400.1 M356.2 400.1 L360.6 374.9 L378.1 370.6 L395.6 370.6 L404.3 388.1 L408.7 400.1 M194.6 0.0 L205.6 10.9 L225.0 19.7 M246.9 43.7 L264.4 56.9 L277.5 78.7 L290.6 91.8" fill="none" stroke="#b9b4bd" stroke-width="0.8" stroke-opacity=".9"/><path d="M312.5 0.0 L312.5 41.5 M338.7 0.0 L338.7 41.5 M365.0 0.0 L365.0 41.5 M406.5 0.0 L406.5 41.5 M432.7 0.0 L432.7 41.5 M448.0 0.0 L448.0 41.5 M365.0 15.3 L450.0 15.3 M365.0 28.4 L450.0 28.4 M365.0 41.5 L450.0 41.5 M343.1 0.0 L334.3 26.2 L365.0 35.0" fill="none" stroke="#bdbdbd" stroke-width="0.7"/><path d="M144.3 16.4 L137.8 35.0 L131.2 56.9 L133.4 72.2 L124.6 94.0 L119.2 113.7 L122.5 131.2 L129.0 153.1 L135.6 174.9 L136.7 200.1 M131.2 200.0 L153.1 230.6 L166.2 265.6 L192.4 291.8 L205.6 313.7 M205.6 313.7 L216.5 340.0 L209.9 357.4" fill="none" stroke="#9cc3dd" stroke-width="0.9" stroke-opacity=".9"/><path d="M347.5 107.2 L356.2 106.1 L360.1 109.3 L354.0 122.5 L351.8 140.0 L354.0 150.9 L350.7 150.9 L347.5 135.6 L345.3 118.1 Z" fill="#aad3df"/><path d="M378.1 24.1 L384.6 21.9 L382.4 28.4 L378.1 32.8 L375.9 30.6 Z" fill="#aad3df"/><path d="M241.1 240.7 L247.9 239.3 L245.2 254.4 L239.7 270.8 L230.2 283 L227.4 279 L235.6 265.3 L238.4 251.6 Z" fill="#bcd8e4"/><path d="M434.9 230.6 L445.9 232.8 L450.0 237.2 L450.0 240.5 L439.3 237.2 Z" fill="#aad3df"/><path d="M286.2 0.0 L303.7 15.3 L321.2 27.3 L338.7 35.0 L351.8 47.0 L365.0 57.3" fill="none" stroke="#f3c586" stroke-width="1.6"/><path d="M410.9 0.0 L397.8 17.5 L386.8 43.7 L382.4 54.7" fill="none" stroke="#f3c586" stroke-width="1.6"/><path d="M225.0 374.9 L242.5 372.8 L262.2 368.4 L279.7 374.9 L290.6 385.9 L299.3 400.1" fill="none" stroke="#f3c586" stroke-width="1.4"/><path d="M450.0 15.3 L432.7 14.2 L413.1 8.7 L399.9 2.2 L397.8 0.0" fill="none" stroke="#e4708c" stroke-width="2.6"/><path d="M404.3 0.0 L397.8 13.1 L386.8 28.4 L378.1 41.5 L369.3 59.0 L358.4 67.8 L351.8 73.3" fill="none" stroke="#e4708c" stroke-width="2"/><path d="M351.8 73.3 L348.6 91.8 L344.2 109.3 L342.0 131.2 L338.7 150.9 L347.5 161.8 L350.7 172.8 L347.5 177.1 L354.0 183.7 L356.2 192.4 L354.0 200.1" fill="none" stroke="#f29a80" stroke-width="1.9" stroke-linejoin="round"/><path d="M352.9 200.0 L356.2 208.7 L356.2 217.5 L365.0 230.6 L373.7 245.9 L369.3 252.5 L370.4 263.4 L367.1 272.2 L369.3 280.9 L365.0 287.5 L368.2 296.2 L365.0 305.0 L367.1 311.5 L365.0 315.9 L368.2 322.5 L360.6 331.2 L354.0 333.4 L343.1 344.3 L336.5 350.9" fill="none" stroke="#f29a80" stroke-width="1.9" stroke-linejoin="round"/><path d="M336.5 350.9 L327.8 356.4 L321.2 370.6 L314.7 385.9 L308.1 400.1" fill="none" stroke="#e4708c" stroke-width="2.2"/><path d="M257.8 333.4 L251.2 353.1 L242.5 370.6 L238.1 383.7 L240.3 400.1" fill="none" stroke="#777" stroke-width="0.9"/><path d="M210.2 4.7 L213.9 -1.6 L217.6 4.7 Z M126.4 13.9 L130.1 7.6 L133.8 13.9 Z M157.5 17.9 L161.2 11.6 L164.9 17.9 Z M112.2 26.6 L115.9 20.3 L119.6 26.6 Z M170.1 26.0 L173.8 19.7 L177.5 26.0 Z M185.0 35.8 L188.7 29.5 L192.4 35.8 Z M47.0 41.9 L50.7 35.6 L54.4 41.9 Z M73.3 39.7 L77.0 33.4 L80.7 39.7 Z M103.2 41.9 L106.9 35.6 L110.6 41.9 Z M112.2 41.9 L115.9 35.6 L119.6 41.9 Z M98.2 50.7 L101.9 44.4 L105.6 50.7 Z M90.3 55.9 L94.0 49.6 L97.7 55.9 Z M-2.0 56.8 L1.7 50.5 L5.4 56.8 Z M162.5 55.0 L166.2 48.7 L169.9 55.0 Z M177.4 56.8 L181.1 50.5 L184.8 56.8 Z M190.0 59.0 L193.7 52.7 L197.4 59.0 Z M105.2 65.3 L108.9 59.0 L112.6 65.3 Z M194.2 68.6 L197.9 62.3 L201.6 68.6 Z M70.2 70.8 L73.9 64.5 L77.6 70.8 Z M142.4 87.8 L146.1 81.5 L149.8 87.8 Z M168.2 88.7 L171.9 82.4 L175.6 88.7 Z M195.3 88.7 L199.0 82.4 L202.7 88.7 Z M140.0 106.9 L143.7 100.6 L147.4 106.9 Z M56.4 109.3 L60.1 103.0 L63.8 109.3 Z M78.3 120.0 L82.0 113.7 L85.7 120.0 Z M174.3 117.6 L178.0 111.3 L181.7 117.6 Z M187.2 117.6 L190.9 111.3 L194.6 117.6 Z M135.4 129.8 L139.1 123.5 L142.8 129.8 Z M174.1 140.8 L177.8 134.5 L181.5 140.8 Z M183.3 145.8 L187.0 139.5 L190.7 145.8 Z M192.0 157.8 L195.7 151.5 L199.4 157.8 Z M180.0 160.4 L183.7 154.1 L187.4 160.4 Z M171.2 166.6 L174.9 160.3 L178.6 166.6 Z M196.0 180.8 L199.7 174.5 L203.4 180.8 Z M182.2 191.5 L185.9 185.2 L189.6 191.5 Z M28.4 182.3 L32.1 176.0 L35.8 182.3 Z M-0.6 193.7 L3.1 187.4 L6.8 193.7 Z M51.4 199.4 L55.1 193.1 L58.8 199.4 Z M226.1 76.3 L229.8 70.0 L233.5 76.3 Z M295.2 75.6 L298.9 69.3 L302.6 75.6 Z M245.4 89.4 L249.1 83.1 L252.8 89.4 Z M232.2 105.1 L235.9 98.8 L239.6 105.1 Z M279.2 134.9 L282.9 128.6 L286.6 134.9 Z M295.2 168.1 L298.9 161.8 L302.6 168.1 Z M312.1 176.8 L315.8 170.5 L319.5 176.8 Z M238.8 181.9 L242.5 175.6 L246.2 181.9 Z M261.3 185.6 L265.0 179.3 L268.7 185.6 Z M293.5 188.9 L297.2 182.6 L300.9 188.9 Z M243.2 199.8 L246.9 193.5 L250.6 199.8 Z M419.2 55.0 L422.9 48.7 L426.6 55.0 Z M437.4 63.8 L441.1 57.5 L444.8 63.8 Z M364.3 101.0 L368.0 94.7 L371.7 101.0 Z M418.1 106.9 L421.8 100.6 L425.5 106.9 Z M380.9 117.8 L384.6 111.5 L388.3 117.8 Z M437.8 170.9 L441.5 164.6 L445.2 170.9 Z M444.3 177.9 L448.0 171.6 L451.7 177.9 Z M424.7 196.5 L428.4 190.2 L432.1 196.5 Z M437.8 195.4 L441.5 189.1 L445.2 195.4 Z M1.1 207.8 L4.8 201.5 L8.5 207.8 Z M45.5 206.9 L49.2 200.6 L52.9 206.9 Z M22.1 224.9 L25.8 218.6 L29.5 224.9 Z M49.2 228.8 L52.9 222.5 L56.6 228.8 Z M73.9 226.6 L77.6 220.3 L81.3 226.6 Z M36.3 239.5 L40.0 233.2 L43.7 239.5 Z M54.2 237.6 L57.9 231.3 L61.6 237.6 Z M84.9 236.9 L88.6 230.6 L92.3 236.9 Z M9.0 248.9 L12.7 242.6 L16.4 248.9 Z M59.3 247.8 L63.0 241.5 L66.7 247.8 Z M69.1 274.7 L72.8 268.4 L76.5 274.7 Z M116.1 285.7 L119.8 279.4 L123.5 285.7 Z M126.4 293.8 L130.1 287.5 L133.8 293.8 Z M127.1 266.9 L130.8 260.6 L134.5 266.9 Z M193.1 248.9 L196.8 242.6 L200.5 248.9 Z M212.4 222.7 L216.1 216.4 L219.8 222.7 Z M147.2 308.0 L150.9 301.7 L154.6 308.0 Z M159.2 322.8 L162.9 316.5 L166.6 322.8 Z M10.1 309.1 L13.8 302.8 L17.5 309.1 Z M34.1 315.0 L37.8 308.7 L41.5 315.0 Z M44.0 317.8 L47.7 311.5 L51.4 317.8 Z M59.1 315.8 L62.8 309.5 L66.5 315.8 Z M87.1 309.1 L90.8 302.8 L94.5 309.1 Z M90.3 340.1 L94.0 333.8 L97.7 340.1 Z M50.1 341.2 L53.8 334.9 L57.5 341.2 Z M58.2 351.0 L61.9 344.7 L65.6 351.0 Z M43.1 355.0 L46.8 348.7 L50.5 355.0 Z M72.2 360.0 L75.9 353.7 L79.6 360.0 Z M85.1 356.7 L88.8 350.4 L92.5 356.7 Z M4.2 365.0 L7.9 358.7 L11.6 365.0 Z M37.0 374.0 L40.7 367.7 L44.4 374.0 Z M54.0 386.9 L57.7 380.6 L61.4 386.9 Z M64.1 397.0 L67.8 390.7 L71.5 397.0 Z M120.1 350.2 L123.8 343.9 L127.5 350.2 Z M120.1 377.1 L123.8 370.8 L127.5 377.1 Z M133.2 374.9 L136.9 368.6 L140.6 374.9 Z M158.1 379.7 L161.8 373.4 L165.5 379.7 Z M165.1 389.1 L168.8 382.8 L172.5 389.1 Z M167.1 362.0 L170.8 355.7 L174.5 362.0 Z M190.3 353.9 L194.0 347.6 L197.7 353.9 Z M227.4 211.3 L231.1 205.0 L234.8 211.3 Z M291.3 206.9 L295.0 200.6 L298.7 206.9 Z M321.5 206.9 L325.2 200.6 L328.9 206.9 Z M308.3 216.1 L312.0 209.8 L315.7 216.1 Z M306.1 224.9 L309.8 218.6 L313.5 224.9 Z M282.1 227.7 L285.8 221.4 L289.5 227.7 Z M324.1 228.8 L327.8 222.5 L331.5 228.8 Z M336.8 221.6 L340.5 215.3 L344.2 221.6 Z M239.2 235.1 L242.9 228.8 L246.6 235.1 Z M259.1 238.6 L262.8 232.3 L266.5 238.6 Z M328.5 240.6 L332.2 234.3 L335.9 240.6 Z M323.2 253.7 L326.9 247.4 L330.6 253.7 Z M277.1 254.8 L280.8 248.5 L284.5 254.8 Z M250.2 266.0 L253.9 259.7 L257.6 266.0 Z M249.3 274.7 L253.0 268.4 L256.7 274.7 Z M240.3 282.6 L244.0 276.3 L247.7 282.6 Z M269.2 279.8 L272.9 273.5 L276.6 279.8 Z M350.3 229.7 L354.0 223.4 L357.7 229.7 Z M380.3 225.5 L384.0 219.2 L387.7 225.5 Z M438.2 211.7 L441.9 205.4 L445.6 211.7 Z M414.4 242.8 L418.1 236.5 L421.8 242.8 Z M342.2 285.9 L345.9 279.6 L349.6 285.9 Z M306.1 297.7 L309.8 291.4 L313.5 297.7 Z M360.2 296.8 L363.9 290.5 L367.6 296.8 Z M336.1 308.8 L339.8 302.5 L343.5 308.8 Z M363.4 308.0 L367.1 301.7 L370.8 308.0 Z M365.2 315.8 L368.9 309.5 L372.6 315.8 Z M279.2 313.6 L282.9 307.3 L286.6 313.6 Z M267.2 330.7 L270.9 324.4 L274.6 330.7 Z M231.1 345.1 L234.8 338.8 L238.5 345.1 Z M228.3 364.2 L232.0 357.9 L235.7 364.2 Z M385.3 335.7 L389.0 329.4 L392.7 335.7 Z M372.2 353.9 L375.9 347.6 L379.6 353.9 Z M414.4 306.7 L418.1 300.4 L421.8 306.7 Z M429.5 276.9 L433.2 270.6 L436.9 276.9 Z M441.3 278.0 L445.0 271.7 L448.7 278.0 Z M428.2 358.0 L431.9 351.7 L435.6 358.0 Z M380.3 389.1 L384.0 382.8 L387.7 389.1 Z M320.1 394.8 L323.8 388.5 L327.5 394.8 Z M259.1 391.5 L262.8 385.2 L266.5 391.5 Z M249.3 398.7 L253.0 392.4 L256.7 398.7 Z " fill="#d08f5a"/><circle cx="225.3" cy="199.3" r="121.5" fill="#3d2a6b" fill-opacity=".30" stroke="#3f2a6c" stroke-width="3.2"/><text x="370.5" y="63.3" font-family="Liberation Sans, sans-serif" font-size="11" fill="#333" text-anchor="middle" stroke="#ffffff" stroke-opacity=".7" stroke-width="2" paint-order="stroke" stroke-linejoin="round">Los Gatos</text><text x="156" y="246.6" font-family="Liberation Sans, sans-serif" font-size="11.3" fill="#3c3c44" text-anchor="middle">Boulder Creek</text><text x="312.5" y="383.8" font-family="Liberation Sans, sans-serif" font-size="11" fill="#333" text-anchor="middle" stroke="#ffffff" stroke-opacity=".7" stroke-width="2" paint-order="stroke" stroke-linejoin="round">Scotts Valley</text><text x="352" y="78.5" font-family="Liberation Sans, sans-serif" font-style="italic" fill="#8c1a2b" font-size="9.5" text-anchor="middle" stroke="#ffffff" stroke-opacity=".7" stroke-width="2" paint-order="stroke" stroke-linejoin="round">19</text><text x="345" y="129.5" font-family="Liberation Sans, sans-serif" font-style="italic" fill="#8c1a2b" font-size="9.5" text-anchor="middle" stroke="#ffffff" stroke-opacity=".7" stroke-width="2" paint-order="stroke" stroke-linejoin="round">17</text><text x="360" y="186.5" font-family="Liberation Sans, sans-serif" font-style="italic" fill="#8c1a2b" font-size="9.5" text-anchor="middle" stroke="#ffffff" stroke-opacity=".7" stroke-width="2" paint-order="stroke" stroke-linejoin="round">14</text><text x="393.5" y="17" font-family="Liberation Sans, sans-serif" font-style="italic" fill="#8c1a2b" font-size="9.5" text-anchor="middle" stroke="#ffffff" stroke-opacity=".7" stroke-width="2" paint-order="stroke" stroke-linejoin="round">21</text><text x="389.5" y="26" font-family="Liberation Sans, sans-serif" font-style="italic" fill="#8c1a2b" font-size="9.5" text-anchor="middle" stroke="#ffffff" stroke-opacity=".7" stroke-width="2" paint-order="stroke" stroke-linejoin="round">21</text><text x="388" y="5.5" font-family="Liberation Sans, sans-serif" font-style="italic" fill="#8c1a2b" font-size="9.5" text-anchor="middle" stroke="#ffffff" stroke-opacity=".7" stroke-width="2" paint-order="stroke" stroke-linejoin="round">17A</text><text x="326" y="367" font-family="Liberation Sans, sans-serif" font-style="italic" fill="#8c1a2b" font-size="9.5" text-anchor="middle" stroke="#ffffff" stroke-opacity=".7" stroke-width="2" paint-order="stroke" stroke-linejoin="round">5</text><text x="433" y="125" font-family="Liberation Sans, sans-serif" font-style="italic" fill="#2f8a3a" font-size="9.6" text-anchor="middle" stroke="#ffffff" stroke-opacity=".7" stroke-width="2" paint-order="stroke" stroke-linejoin="round">Sierra Azul</text><text x="433" y="136.7" font-family="Liberation Sans, sans-serif" font-style="italic" fill="#2f8a3a" font-size="9.6" text-anchor="middle" stroke="#ffffff" stroke-opacity=".7" stroke-width="2" paint-order="stroke" stroke-linejoin="round">Open Space</text><text x="433" y="148.3" font-family="Liberation Sans, sans-serif" font-style="italic" fill="#2f8a3a" font-size="9.6" text-anchor="middle" stroke="#ffffff" stroke-opacity=".7" stroke-width="2" paint-order="stroke" stroke-linejoin="round">Preserve</text><text x="438" y="330" font-family="Liberation Sans, sans-serif" font-style="italic" fill="#777" font-size="9.6" text-anchor="start" stroke="#ffffff" stroke-opacity=".7" stroke-width="2" paint-order="stroke" stroke-linejoin="round">De L</text><text x="445" y="341.5" font-family="Liberation Sans, sans-serif" font-style="italic" fill="#777" font-size="9.6" text-anchor="start" stroke="#ffffff" stroke-opacity=".7" stroke-width="2" paint-order="stroke" stroke-linejoin="round">St</text><path d="M225.1 195.9 C220.6 190.2 203.6 177.5 203.6 161.8 A21.5 21.5 0 1 1 246.6 161.8 C246.6 177.5 229.6 190.2 225.1 195.9 Z" fill="#42296e"/><circle cx="225.1" cy="162.1" r="8.1" fill="#fff"/></svg>
<div class="b" style="left:891.0px;top:181.0px;width:30.0px;height:60.0px;background:#fff;border-radius:4px;box-shadow:0 1px 4px rgba(0,0,0,.3);"></div>
<div class="b" style="left:891.0px;top:210.0px;width:30.0px;height:1.0px;background:#ccc;"></div>
<svg style="left:891px;top:181px" width="30" height="60" viewBox="0 0 30 60" stroke="#000" stroke-width="2.3" fill="none"><path d="M9.2 15.3 H21.2 M15.2 9.3 V21.3 M9.8 45.3 H21.4"/></svg>
<div class="b" style="left:891.0px;top:251.0px;width:30.0px;height:30.0px;background:#fff;border-radius:4px;box-shadow:0 1px 4px rgba(0,0,0,.3);"></div>
<svg style="left:891px;top:251px" width="30" height="30" viewBox="0 0 30 30" stroke="#3f2a6d" stroke-width="1.4" fill="none" stroke-linejoin="round"><path d="M8 13.2 L21.3 8.3 L16.8 21.8 L14.3 15.2 Z"/></svg>
<div class="t " style="left:881.3px;top:579.0px;font-size:14.07px;font-weight:400;color:#2b2b2b;letter-spacing:0.0px;">Radius</div>
<div class="t " style="left:935.6px;top:579.0px;font-size:15.05px;font-weight:400;color:#2b2b2b;letter-spacing:0.0px;">Select a radius from 10 to 10,000 meters.</div>
<div class="b" style="left:885.7px;top:619.9px;width:316.7px;height:10.4px;background:#e3ddee;border-radius:5.2px;"></div>
<div class="b" style="left:885.7px;top:619.9px;width:232.3px;height:10.4px;background:#432a6e;border-radius:5.2px 0 0 5.2px;"></div>
<div class="b" style="left:1110.8px;top:614.4px;width:10.5px;height:20.5px;background:#7a62aa;border-radius:1.5px;"></div>
<div class="b" style="left:1217.0px;top:607.0px;width:60.0px;height:35.0px;border:1px solid #555;border-radius:4px;background:#fff;"></div>
<div class="t " style="left:1230.5px;top:612.2px;font-size:14.38px;font-weight:400;color:#111;letter-spacing:0.0px;">7356</div>
<div class="t " style="left:1282.0px;top:612.0px;font-size:16.03px;font-weight:400;color:#2b2b2b;letter-spacing:0.0px;">Meters</div>
<div class="t " style="left:881.3px;top:655.0px;font-size:14.65px;font-weight:400;color:#2b2b2b;letter-spacing:0.0px;">Location Name:</div>
<div class="b" style="left:1003.0px;top:650.3px;width:328.0px;height:34.4px;border:1px solid #555;border-radius:4px;background:#fff;"></div>
<div class="t " style="left:1010.0px;top:655.4px;font-size:13.84px;font-weight:400;color:#222;letter-spacing:-0.0px;">Boulder Creeks</div>
<div class="t " style="left:1309.2px;top:655.0px;font-size:12.94px;font-weight:400;color:#858585;letter-spacing:0.0px;">36</div>
<div class="b" style="left:556.0px;top:712.0px;width:800.0px;height:1.0px;background:#dcdcdc;"></div>
<div class="b" style="left:1164.0px;top:728.2px;width:80.0px;height:38.6px;border:2px solid #1b7487;border-radius:4px;background:#fff;"></div>
<div class="t " style="left:1179.8px;top:735.6px;font-size:15.61px;font-weight:400;color:#1b7487;letter-spacing:-0.0px;">Cancel</div>
<div class="b" style="left:1252.2px;top:728.2px;width:79.6px;height:38.6px;border:2px solid #42296e;border-radius:4px;background:#fff;"></div>
<div class="t " style="left:1275.2px;top:735.6px;font-size:14.69px;font-weight:400;color:#42296e;letter-spacing:0.0px;">Save</div>

</div>
</body></html>
